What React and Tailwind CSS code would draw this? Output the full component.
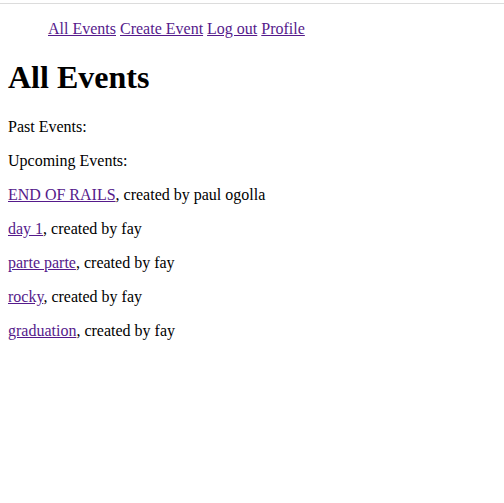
export default function App() {
  const events = [
    ["END OF RAILS", "paul ogolla"],
    ["day 1", "fay"],
    ["parte parte", "fay"],
    ["rocky", "fay"],
    ["graduation", "fay"],
  ];
  const link = "text-[#551a8b] underline";
  return (
    <div className="font-['Liberation_Serif',serif] text-[16px] leading-[normal] text-black bg-white min-h-[503px]">
      <div className="pt-[3px]">
        <div className="h-px bg-[#dcdcdc]" />
      </div>
      <div className="px-2 pb-2">
        <ul className="mt-4 pl-10">
          <li className="inline"><a href="#" className={link}>All Events</a></li>{" "}
          <li className="inline"><a href="#" className={link}>Create Event</a></li>{" "}
          <li className="inline"><a href="#" className={link}>Log out</a></li>{" "}
          <li className="inline"><a href="#" className={link}>Profile</a></li>
        </ul>
        <h1 className="text-[32px] font-bold my-[21.44px]">All Events</h1>
        <p className="my-4">Past Events:</p>
        <p className="my-4">Upcoming Events:</p>
        {events.map(([name, by]) => (
          <p key={name} className="my-4">
            <a href="#" className={link}>{name}</a>, created by {by}
          </p>
        ))}
      </div>
    </div>
  );
}
